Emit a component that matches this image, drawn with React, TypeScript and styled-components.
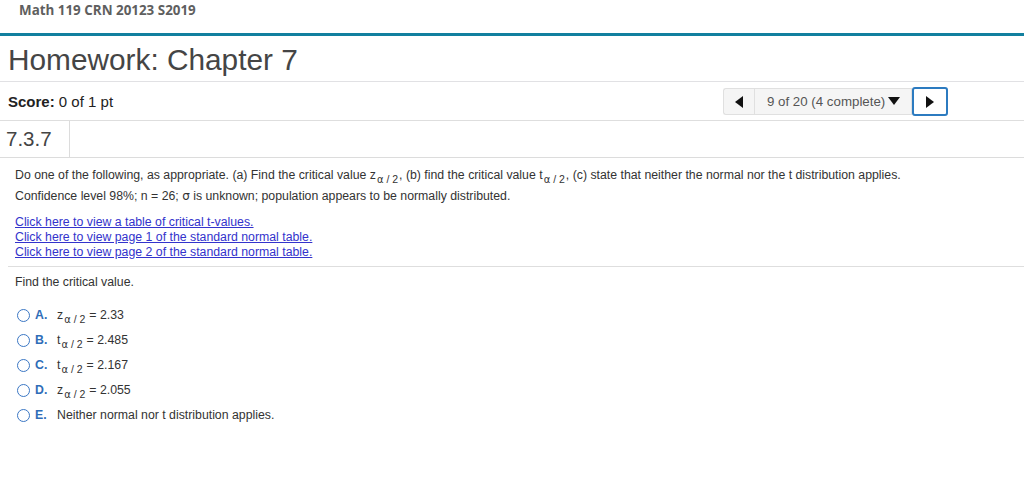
import React from "react";
import styled, { createGlobalStyle } from "styled-components";

const Global = createGlobalStyle`
  html, body { margin: 0; padding: 0; background: #fff; }
  body { font-family: "Liberation Sans", Arial, sans-serif; color: #333; }
`;

const Page = styled.div`
  width: 1024px;
  height: 502px;
  overflow: hidden;
  background: #fff;
`;

const CourseBar = styled.div`
  height: 36px;
  box-sizing: border-box;
  padding: 1px 0 0 19px;
  font-family: "Open Sans", sans-serif;
  font-weight: 700;
  font-size: 13.4px;
  color: #5f5f5f;
  border-bottom: 3px solid #12809f;
`;

const Title = styled.h1`
  margin: 0;
  height: 46px;
  box-sizing: border-box;
  padding: 7px 0 0 8px;
  font-weight: 400;
  font-size: 29.8px;
  line-height: 34px;
  color: #454545;
  border-bottom: 1px solid #e1e1e4;
`;

const ScoreRow = styled.div`
  height: 39px;
  box-sizing: border-box;
  display: flex;
  align-items: center;
  padding-left: 8px;
  padding-right: 76px;
  font-size: 15px;
  color: #222;
  border-bottom: 1px solid #dedede;
  justify-content: space-between;
`;

const Nav = styled.div`
  display: flex;
  align-items: stretch;
  height: 27px;
  margin-top: 1px;
`;

const NavLeft = styled.div`
  width: 31px;
  box-sizing: border-box;
  background: #f5f5f5;
  border: 1px solid #e0e0e0;
  border-right: none;
  border-radius: 3px 0 0 3px;
  display: flex;
  align-items: center;
  justify-content: center;
`;

const NavMid = styled.div`
  width: 158px;
  box-sizing: border-box;
  background: #f5f5f5;
  border: 1px solid #e0e0e0;
  display: flex;
  align-items: center;
  padding-left: 12px;
  gap: 3px;
  font-size: 13.3px;
  color: #555;
`;

const NavRight = styled.div`
  width: 36px;
  box-sizing: border-box;
  background: #fff;
  border: 2px solid #2c7bc0;
  border-radius: 3px;
  margin-top: -1px;
  height: 29px;
  display: flex;
  align-items: center;
  justify-content: center;
`;

const IdRow = styled.div`
  height: 37px;
  box-sizing: border-box;
  border-bottom: 1px solid #dcdcdc;
  display: flex;
`;

const IdBox = styled.div`
  width: 70px;
  box-sizing: border-box;
  border-right: 1px solid #dcdcdc;
  padding-left: 6px;
  display: flex;
  align-items: center;
  font-size: 20.5px;
  color: #444;
`;

const Body = styled.div`
  padding: 7px 0 0 15px;
  font-size: 12.3px;
  color: #333;
`;

const Para = styled.p`
  margin: 0;
  line-height: 20px;
`;

const Links = styled.div`
  margin-top: 8.5px;
  display: flex;
  flex-direction: column;
  line-height: 15px;
`;

const Link = styled.a`
  color: #3333cc;
  text-decoration: underline;
  width: fit-content;
`;

const Divider = styled.div`
  margin: 6.5px 0 0 -7px;
  border-top: 1px solid #dedede;
`;

const Prompt = styled.p`
  margin: 0;
  padding: 7px 0 0 15px;
  font-size: 12.3px;
  color: #333;
  line-height: 16px;
`;

const Options = styled.div`
  padding: 16.5px 0 0 17px;
  display: flex;
  flex-direction: column;
  gap: 8px;
`;

const Option = styled.label`
  display: flex;
  align-items: center;
  height: 17px;
  font-size: 12.3px;
  color: #333;
`;

const Radio = styled.span`
  width: 13px;
  height: 13px;
  border: 1.5px solid #3b77c4;
  border-radius: 50%;
  box-sizing: border-box;
  margin-right: 5px;
`;

const Letter = styled.span`
  font-weight: 700;
  color: #2f6db8;
  width: 22px;
`;

const Sub = styled.span<{ $after: number }>`
  position: relative;
  top: 4px;
  font-size: 10.5px;
  margin: 0 ${(p) => p.$after}px 0 1px;
`;

const Alpha = styled.span`
  font-family: "DejaVu Sans", sans-serif;
  font-size: 10px;
`;

const Sigma = styled.span`
  font-family: "DejaVu Sans", sans-serif;
  font-size: 12px;
`;

const Tri = ({ dir }: { dir: "left" | "right" | "down" }) => {
  const d =
    dir === "left"
      ? "M9 0 L9 12 L1 6 Z"
      : dir === "right"
      ? "M1 0 L9 6 L1 12 Z"
      : "M0 1 L12 1 L6 9 Z";
  const w = dir === "down" ? 12 : 10;
  return (
    <svg width={w} height={12} viewBox={`0 0 ${w} 12`}>
      <path d={d} fill="#111" />
    </svg>
  );
};

const Sym = ({ v, after = 1 }: { v: string; after?: number }) => (
  <span>
    {v}
    <Sub $after={after}>
      <Alpha>α</Alpha> / 2
    </Sub>
  </span>
);

const options: { l: string; content: React.ReactNode }[] = [
  { l: "A.", content: <><Sym v="z" after={4} />= 2.33</> },
  { l: "B.", content: <><Sym v="t" after={4} />= 2.485</> },
  { l: "C.", content: <><Sym v="t" after={4} />= 2.167</> },
  { l: "D.", content: <><Sym v="z" after={4} />= 2.055</> },
  { l: "E.", content: <>Neither normal nor t distribution applies.</> },
];

export default function App() {
  return (
    <Page>
      <Global />
      <CourseBar>Math 119 CRN 20123 S2019</CourseBar>
      <Title>Homework: Chapter 7</Title>
      <ScoreRow>
        <span>
          <b>Score:</b> 0 of 1 pt
        </span>
        <Nav>
          <NavLeft>
            <Tri dir="left" />
          </NavLeft>
          <NavMid>
            9 of 20 (4 complete) <Tri dir="down" />
          </NavMid>
          <NavRight>
            <Tri dir="right" />
          </NavRight>
        </Nav>
      </ScoreRow>
      <IdRow>
        <IdBox>7.3.7</IdBox>
      </IdRow>
      <Body>
        <Para>
          Do one of the following, as appropriate. (a) Find the critical value <Sym v="z" />, (b) find
          the critical value <Sym v="t" />, (c) state that neither the normal nor the t distribution
          applies.
        </Para>
        <Para>
          Confidence level 98%; n = 26; <Sigma>σ</Sigma> is unknown; population appears to be
          normally distributed.
        </Para>
        <Links>
          <Link>Click here to view a table of critical t-values.</Link>
          <Link>Click here to view page 1 of the standard normal table.</Link>
          <Link>Click here to view page 2 of the standard normal table.</Link>
        </Links>
        <Divider />
      </Body>
      <Prompt>Find the critical value.</Prompt>
      <Options>
        {options.map((o) => (
          <Option key={o.l}>
            <Radio />
            <Letter>{o.l}</Letter>
            <span>{o.content}</span>
          </Option>
        ))}
      </Options>
    </Page>
  );
}
